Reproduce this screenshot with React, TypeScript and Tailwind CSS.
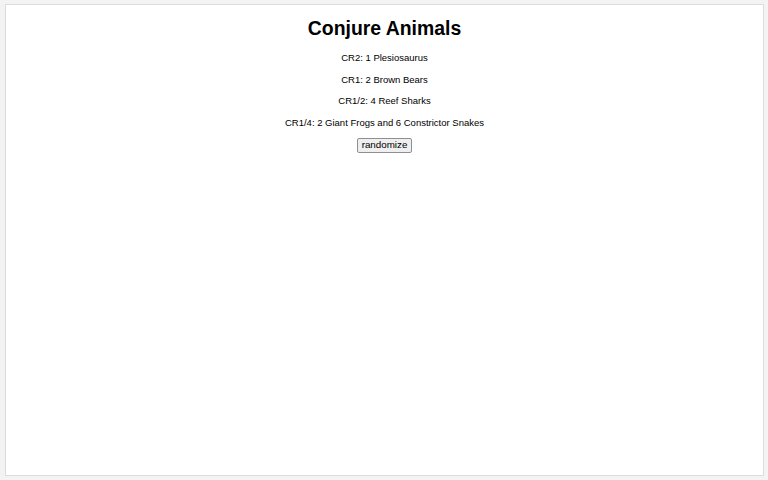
import { useState } from "react";

const lines = [
  "CR2: 1 Plesiosaurus",
  "CR1: 2 Brown Bears",
  "CR1/2: 4 Reef Sharks",
  "CR1/4: 2 Giant Frogs and 6 Constrictor Snakes",
];

export default function App() {
  const [rolls] = useState(lines);

  return (
    <div className="h-[480px] w-full bg-[#f3f3f3] pt-[4px] pb-[4px] pl-[5px] pr-[4px] font-['Liberation_Sans',Arial,sans-serif]">
      <div className="h-full border border-[#dcdcdc] bg-white flex flex-col items-center text-black">
        <h1 className="mt-[11px] text-[19.4px] font-bold leading-[24px]">Conjure Animals</h1>
        <div className="mt-[12px] flex flex-col items-center">
          {rolls.map((line) => (
            <p key={line} className="h-[21.7px] text-[9.5px] leading-[12px]">
              {line}
            </p>
          ))}
        </div>
        <button className="mt-[-1px] h-[15px] px-[4px] text-[9.8px] leading-[12px] bg-[#efefef] border border-[#8f8f8f] rounded-[2px]">
          randomize
        </button>
      </div>
    </div>
  );
}
